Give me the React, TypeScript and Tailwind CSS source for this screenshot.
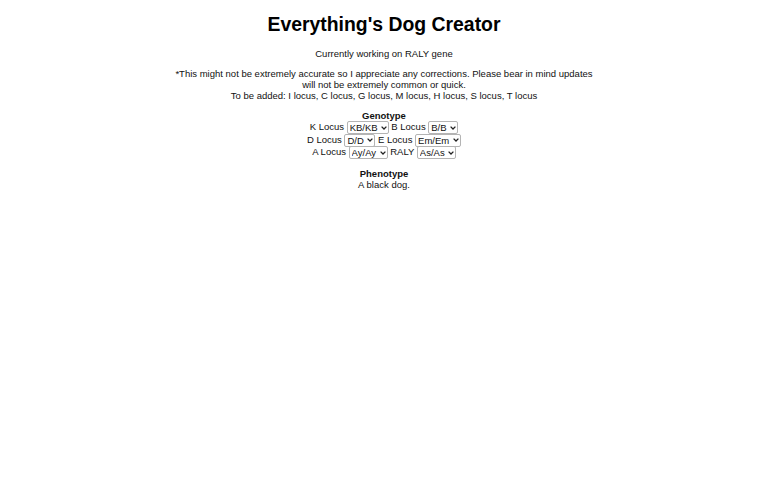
import React from "react";

type Locus = { label: string; value: string; options: string[] };

const rows: [Locus, Locus][] = [
  [
    { label: "K Locus", value: "KB/KB", options: ["KB/KB", "KB/ky", "ky/ky"] },
    { label: "B Locus", value: "B/B", options: ["B/B", "B/b", "b/b"] },
  ],
  [
    { label: "D Locus", value: "D/D", options: ["D/D", "D/d", "d/d"] },
    { label: "E Locus", value: "Em/Em", options: ["Em/Em", "Em/E", "E/E", "E/e", "e/e"] },
  ],
  [
    { label: "A Locus", value: "Ay/Ay", options: ["Ay/Ay", "Ay/at", "at/at", "a/a"] },
    { label: "RALY", value: "As/As", options: ["As/As", "As/N", "N/N"] },
  ],
];

function LocusSelect({ locus }: { locus: Locus }) {
  return (
    <>
      <span>{locus.label} </span>
      <span className="relative inline-block align-middle">
        <select
          defaultValue={locus.value}
          className="appearance-none border border-[#b4b4b4] rounded-[2px] bg-white text-[9.5px] h-[13px] leading-[11px] pl-[2px] pr-[10px] block"
        >
          {locus.options.map((o) => (
            <option key={o} value={o}>
              {o}
            </option>
          ))}
        </select>
        <svg
          className="absolute right-[2px] top-[4.5px] pointer-events-none"
          width="6"
          height="4"
          viewBox="0 0 6 4"
        >
          <path d="M0.6 0.6 L3 3 L5.4 0.6" fill="none" stroke="#222" strokeWidth="1.3" />
        </svg>
      </span>
    </>
  );
}

export default function App() {
  return (
    <div
      className="w-[768px] min-h-[480px] bg-white text-[#111] text-center text-[9.5px] leading-[11px]"
      style={{ fontFamily: '"Liberation Sans", Arial, sans-serif' }}
    >
      <h1 className="text-[19.4px] leading-[23px] font-bold pt-[13px] text-black">Everything's Dog Creator</h1>
      <p className="mt-[12px]">Currently working on RALY gene</p>
      <p className="mt-[9px]">
        *This might not be extremely accurate so I appreciate any corrections. Please bear in mind updates
        <br />
        will not be extremely common or quick.
        <br />
        To be added: I locus, C locus, G locus, M locus, H locus, S locus, T locus
      </p>
      <div className="mt-[9px]">
        <div className="font-bold">Genotype</div>
        {rows.map(([a, b], i) => (
          <div key={i} className="h-[12.5px] leading-[12px]">
            <LocusSelect locus={a} /> <LocusSelect locus={b} />
          </div>
        ))}
      </div>
      <div className="mt-[9px]">
        <div className="font-bold">Phenotype</div>
        <div>A black dog.</div>
      </div>
    </div>
  );
}
